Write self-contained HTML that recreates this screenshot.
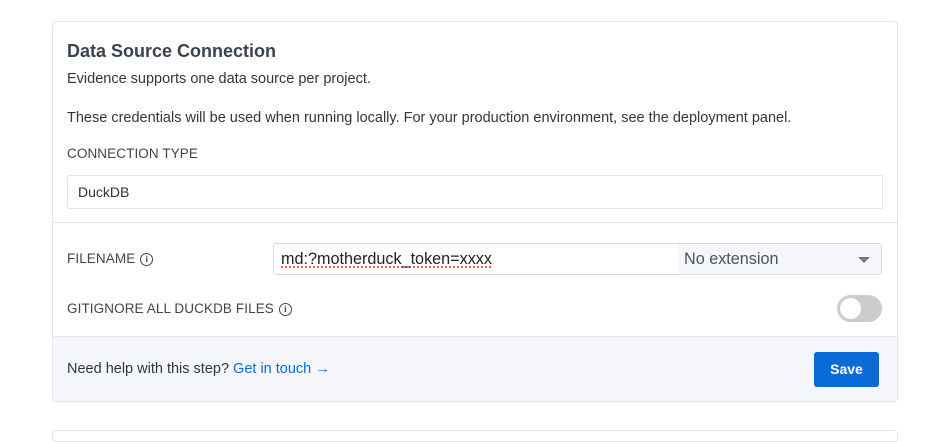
<!DOCTYPE html>
<html><head><style>
body{margin:0;width:948px;height:432px;background:#fff;font-family:"Liberation Sans",sans-serif;color:#374151;position:relative;overflow:hidden}
.card{position:absolute;left:52px;top:21px;width:844px;height:379px;border:1px solid #e3e5ea;border-radius:4px;overflow:hidden}
.a{position:absolute;white-space:nowrap}
.t{font-size:18px;font-weight:bold;color:#3a4350}
.s{font-size:14.5px;color:#2f3640}
.lab{font-size:13.5px;color:#3d4450;letter-spacing:.1px}
.info{display:inline-block;width:11px;height:11px;border:1.3px solid #444;border-radius:50%;font-size:9px;line-height:11px;text-align:center;font-weight:bold;vertical-align:1px;margin-left:5px;font-family:"Liberation Serif",serif}
</style></head><body>
<div class="card">
<div class="a t" style="left:14px;top:19px">Data Source Connection</div>
<div class="a s" style="left:14px;top:49px">Evidence supports one data source per project.</div>
<div class="a s" style="left:14px;top:88px">These credentials will be used when running locally. For your production environment, see the deployment panel.</div>
<div class="a lab" style="left:14px;top:124px">CONNECTION TYPE</div>
<div class="a" style="left:14px;top:153px;width:814px;height:32px;border:1px solid #e3e5ea;border-radius:2px;font-size:14px;line-height:32px;text-indent:10px;color:#333">DuckDB</div>
<div class="a" style="left:0;top:200px;width:844px;height:1px;background:#e3e5ea"></div>
<div class="a lab" style="left:14px;top:229px">FILENAME<span class="info">i</span></div>
<div class="a" style="left:220px;top:221px;width:404px;height:30px;border:1px solid #d6d9df;border-radius:3px 0 0 3px;font-size:16.2px;line-height:30px;text-indent:7px;color:#222"><span style="text-decoration:underline dotted #e33;text-underline-offset:3px">md:?motherduck_token=xxxx</span></div>
<div class="a" style="left:625px;top:221px;width:203px;height:30px;border:1px solid #d6d9df;border-left:none;border-radius:0 3px 3px 0;background:#f5f6fa;font-size:16.2px;line-height:31px;text-indent:6px;color:#4b5260">No extension<span style="position:absolute;right:11px;top:13px;border:6px solid transparent;border-top:6px solid #777;border-bottom:none;width:0"></span></div>
<div class="a lab" style="left:14px;top:279px">GITIGNORE ALL DUCKDB FILES<span class="info">i</span></div>
<div class="a" style="left:784px;top:273px;width:45px;height:27px;border-radius:14px;background:#ccc"><div style="position:absolute;left:3px;top:3px;width:21px;height:21px;border-radius:50%;background:#fff"></div></div>
<div class="a" style="left:0;top:314px;width:844px;height:66px;background:#f5f6fa;border-top:1px solid #e3e5ea"></div>
<div class="a s" style="left:14px;top:339px">Need help with this step? <span style="color:#0a6ad8">Get in touch →</span></div>
<div class="a" style="left:761px;top:330px;width:65px;height:35px;background:#0a6ad8;border-radius:3px;color:#fff;font-weight:bold;font-size:14px;line-height:35px;text-align:center">Save</div>
</div>
<div class="a" style="left:52px;top:430px;width:844px;height:10px;border:1px solid #e3e5ea;border-radius:4px"></div>
</body></html>
